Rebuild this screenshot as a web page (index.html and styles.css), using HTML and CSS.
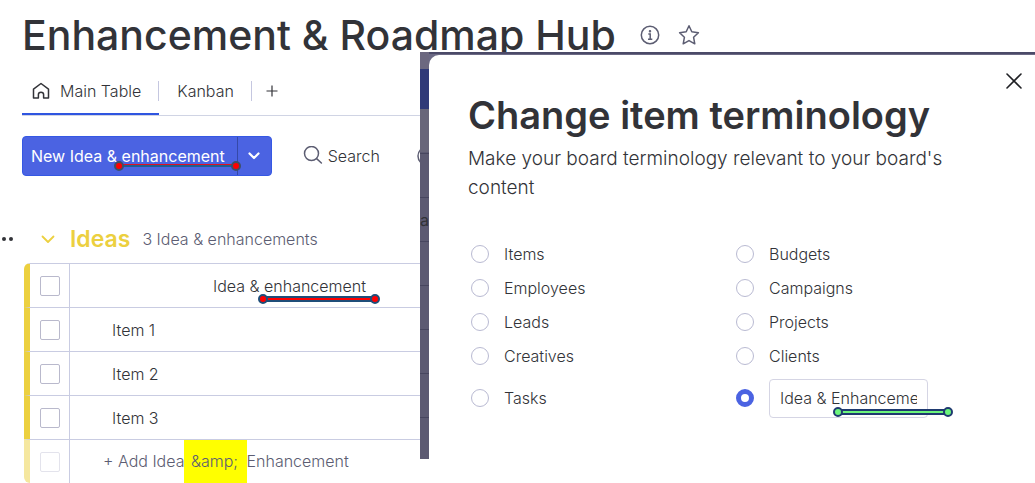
FILE: index.html
```
<!DOCTYPE html>
<html lang="en">
<head>
    <meta charset="UTF-8">
    <meta name="viewport" content="width=device-width, initial-scale=1.0">
    <title>Enhancement &amp; Roadmap Hub</title>
    <link rel="stylesheet" href="styles.css">
</head>
<body>
    <header class="board-header">
        <h1>Enhancement &amp; Roadmap Hub</h1>
        <button class="icon-btn" aria-label="Board info">
            <svg width="20" height="20" viewBox="0 0 20 20" fill="none" stroke="#5c5d72" stroke-width="1.5">
                <circle cx="10" cy="10" r="8.7"/>
                <path d="M8.3 9H10.2V14M8 14.2H12.3"/>
                <circle cx="10" cy="6.2" r="0.5" fill="#5c5d72"/>
            </svg>
        </button>
        <button class="icon-btn" aria-label="Add to favorites">
            <svg width="22" height="22" viewBox="0 0 22 22" fill="none" stroke="#5c5d72" stroke-width="1.5" stroke-linejoin="round">
                <path d="M11 1.8L13.8 7.8L20.4 8.7L15.6 13.3L16.8 19.8L11 16.6L5.2 19.8L6.4 13.3L1.6 8.7L8.2 7.8Z"/>
            </svg>
        </button>
    </header>

    <main class="layout">
        <section class="board">
            <nav class="tabs">
                <a href="#" class="tab active">
                    <svg width="18" height="18" viewBox="0 0 18 18" fill="none" stroke="#323338" stroke-width="1.5" stroke-linejoin="round">
                        <path d="M1.5 7.2L9 1.5L16.5 7.2V16H11.6V12.6C11.6 11 10.6 10.2 9 10.2S6.4 11 6.4 12.6V16H1.5Z"/>
                    </svg>
                    Main Table
                </a>
                <a href="#" class="tab">Kanban</a>
                <button class="add-tab" aria-label="Add view">
                    <svg width="12" height="12" viewBox="0 0 12 12" stroke="#323338" stroke-width="1.2"><path d="M6 0.5V11.5M0.5 6H11.5"/></svg>
                </button>
            </nav>

            <div class="toolbar">
                <div class="split-btn">
                    <button class="new-item">New Idea &amp; <span class="marked">enhancement<i class="callout thin"></i></span></button>
                    <button class="new-menu" aria-label="More item types">
                        <svg width="12" height="8" viewBox="0 0 12 8" fill="none" stroke="#fff" stroke-width="2.2" stroke-linecap="round" stroke-linejoin="round"><path d="M1.5 1.5L6 6L10.5 1.5"/></svg>
                    </button>
                </div>
                <button class="search">
                    <svg width="20" height="20" viewBox="0 0 20 20" fill="none" stroke="#5c5d72" stroke-width="1.5" stroke-linecap="round"><circle cx="8.5" cy="7.5" r="7"/><path d="M13.6 12.6L18.4 17"/></svg>
                    Search
                </button>
                <button class="person" aria-label="Person">
                    <svg width="20" height="20" viewBox="0 0 20 20" fill="none" stroke="#5c5d72" stroke-width="1.5"><circle cx="10" cy="10" r="9"/></svg>
                </button>
            </div>

            <div class="group-header">
                <button class="group-menu" aria-label="Group menu">
                    <svg width="14" height="6" viewBox="0 0 14 6" fill="#323338"><circle cx="4" cy="3" r="2"/><circle cx="11" cy="3" r="2"/></svg>
                </button>
                <button class="group-toggle" aria-label="Collapse group">
                    <svg width="14" height="9" viewBox="0 0 14 9" fill="none" stroke="#ecd03f" stroke-width="1.8" stroke-linecap="round" stroke-linejoin="round"><path d="M1.5 1.5L7 7L12.5 1.5"/></svg>
                </button>
                <h2>Ideas</h2>
                <span class="count">3 Idea &amp; enhancements</span>
            </div>

            <table class="items">
                <thead>
                    <tr>
                        <th class="check"><input type="checkbox" aria-label="Select all"></th>
                        <th class="name">Idea &amp; <span class="marked">enhancement<i class="callout"></i></span></th>
                    </tr>
                </thead>
                <tbody>
                    <tr>
                        <td class="check"><input type="checkbox" aria-label="Select Item 1"></td>
                        <td class="name">Item 1</td>
                    </tr>
                    <tr>
                        <td class="check"><input type="checkbox" aria-label="Select Item 2"></td>
                        <td class="name">Item 2</td>
                    </tr>
                    <tr>
                        <td class="check"><input type="checkbox" aria-label="Select Item 3"></td>
                        <td class="name">Item 3</td>
                    </tr>
                    <tr class="add-row">
                        <td class="check"><input type="checkbox" aria-label="New item" disabled></td>
                        <td class="name">+ Add Idea<span class="highlight"> &amp;amp; </span>Enhancement</td>
                    </tr>
                </tbody>
            </table>
        </section>

        <section class="overlay">
            <div class="backdrop"><span>a</span></div>
            <form class="modal">
                <button type="button" class="close" aria-label="Close">
                    <svg width="16" height="16" viewBox="0 0 16 16" stroke="#1f2024" stroke-width="1.6" stroke-linecap="round"><path d="M1 1L15 15M15 1L1 15"/></svg>
                </button>
                <h2>Change item terminology</h2>
                <p>Make your board terminology relevant to your board's content</p>
                <div class="options">
                    <label><input type="radio" name="term">Items</label>
                    <label><input type="radio" name="term">Budgets</label>
                    <label><input type="radio" name="term">Employees</label>
                    <label><input type="radio" name="term">Campaigns</label>
                    <label><input type="radio" name="term">Leads</label>
                    <label><input type="radio" name="term">Projects</label>
                    <label><input type="radio" name="term">Creatives</label>
                    <label><input type="radio" name="term">Clients</label>
                    <label><input type="radio" name="term">Tasks</label>
                    <div class="custom">
                        <input type="radio" name="term" aria-label="Custom term" checked>
                        <input type="text" aria-label="Custom term name" value="Idea &amp; Enhancement">
                        <i class="callout green"></i>
                    </div>
                </div>
            </form>
        </section>
    </main>
</body>
</html>
```
FILE: styles.css
```
*, *::before, *::after {
    margin: 0;
    padding: 0;
    box-sizing: border-box;
}
body {
    font-family: 'Inter', 'Liberation Sans', sans-serif;
    font-size: 16px;
    font-weight: 300;
    color: #323338;
    background: #fff;
    overflow: hidden;
}
button { font: inherit; color: inherit; background: none; border: none; cursor: pointer; }
svg { display: block; flex: none; }

/* Board title */
.board-header { display: flex; align-items: center; height: 52px; padding: 18px 22px 0; }
.board-header h1 { font-size: 41px; font-weight: 500; line-height: 48px; white-space: nowrap; margin-right: 24px; }
.icon-btn { margin-right: 18px; }

.layout { display: grid; grid-template-columns: 420px 1fr; align-items: start; position: relative; }
.board { min-width: 0; }

/* Tabs */
.tabs { display: flex; align-items: stretch; height: 50px; margin: 14px 0 0 22px; border-bottom: 1px solid #d0d4e4; }
.tab { position: relative; display: flex; align-items: center; gap: 10px; padding: 0 18px; color: inherit; text-decoration: none; }
.tab.active { padding-left: 10px; border-bottom: 2px solid #2f55e0; padding-top: 2px; }
.tab::after { content: ''; position: absolute; right: 0; top: 15px; height: 20px; width: 1px; background: #c5c7e0; }
.add-tab { padding: 0 14px; }

/* Toolbar */
.toolbar { display: flex; align-items: center; height: 40px; margin: 20px 0 0 22px; overflow: hidden; }
.split-btn { display: flex; flex: none; height: 40px; color: #fff; background: #4b63e2; border: 1px solid #3558e4; border-radius: 4px; }
.new-item { padding: 0 12px 0 8px; font-weight: 400; white-space: nowrap; }
.new-menu { width: 34px; display: flex; align-items: center; justify-content: center; border-left: 1px solid #3549a8; }
.search { display: flex; align-items: center; gap: 5px; margin-left: 31px; }
.person { margin-left: 37px; }

/* Group */
.group-header { display: flex; align-items: center; height: 48px; margin-top: 39px; }
.group-menu { width: 14px; }
.group-toggle { margin: 0 15px 0 27px; }
.group-header h2 { font-size: 23px; font-weight: 600; color: #ecd03f; margin-right: 12px; }
.count { color: #5c5d72; }

/* Items table */
.items { width: 396px; margin-left: 24px; border-collapse: separate; border-spacing: 0; table-layout: fixed; }
.items th, .items td { height: 44px; border-top: 1px solid #c9cce2; font-weight: 300; text-align: left; vertical-align: middle; white-space: nowrap; }
.items .check { width: 46px; padding-left: 10px; border-left: 6px solid #ecd03f; border-right: 1px solid #c9cce2; }
.items td.name { padding-left: 42px; }
.items th.name { padding-left: 143px; }
.items th.check { border-top-left-radius: 6px; }
.items .add-row .check { border-left-color: #f5e79f; border-bottom-left-radius: 6px; }
.items .add-row .name { padding-left: 33px; color: #5c5d72; }
input[type="checkbox"] { display: block; appearance: none; width: 20px; height: 20px; border: 1px solid #b9b9cc; border-radius: 2px; background: #fff; }
input[type="checkbox"]:disabled { border-color: #e3e3ec; }
.highlight { display: inline-block; padding: 0 4px 0 2px; line-height: 43px; white-space: pre; background: #ff0; }

/* Underline markers */
.marked { position: relative; }
.callout { position: absolute; left: -3px; right: -11px; bottom: -6px; height: 6px; background: #f00; border: 2px solid #1f4e79; }
.callout::before, .callout::after { content: ''; position: absolute; top: -4px; width: 10px; height: 10px; border-radius: 50%; background: #f00; border: 2px solid #1f4e79; }
.callout::before { left: -5px; }
.callout::after { right: -5px; }
.callout.thin { height: 3px; bottom: -1px; background: #1f5f90; border: none; border-top: 1px solid #e01020; }
.callout.thin::before, .callout.thin::after { border-color: #3f4f66; }
.callout.green { left: 100px; right: -22px; bottom: 8px; background: #6cf57c; border-color: #1f3a70; }
.callout.green::before, .callout.green::after { background: #6cf57c; border-color: #1f3a70; }

/* Terminology dialog */
.overlay { position: relative; display: flex; padding-top: 3px; background: linear-gradient(#4b4a68 0 2px, #6c6a85 2px 17px, #fff 17px); }
.backdrop { flex: none; width: 9px; margin-top: -3px; overflow: hidden; background: linear-gradient(#6c6880 17px, #303a78 17px 57px, #68667a 57px 100px, transparent 100px), repeating-linear-gradient(#5c5a72 0 13px, #47465f 13px 14px, #5c5a72 14px 44px); }
.backdrop span { display: block; margin-top: 158px; font-weight: 400; line-height: 20px; }
.modal { flex: 1; min-width: 0; padding: 18px 13px 36px 39px; background: #fff; border-top-left-radius: 10px; }
.close { display: block; margin-left: auto; width: 16px; height: 16px; }
.modal h2 { font-size: 38px; font-weight: 600; line-height: 44px; margin-top: 4px; white-space: nowrap; }
.modal p { max-width: 480px; font-size: 19px; line-height: 29px; margin-top: 7px; }
.options { display: grid; grid-template-columns: 1fr 1fr; max-width: 530px; margin: 35px 0 0 3px; }
.options label { display: flex; align-items: center; gap: 15px; min-height: 34px; }
.custom { position: relative; display: flex; align-items: center; gap: 15px; justify-self: start; min-height: 50px; }
input[type="radio"] { flex: none; appearance: none; width: 18px; height: 18px; border: 1px solid #b9bad2; border-radius: 50%; background: #fff; }
input[type="radio"]:checked { border: 5px solid #4b63e2; }
input[type="text"] { width: 159px; height: 39px; padding: 0 10px; font: inherit; color: inherit; border: 1px solid #d5d5e4; border-radius: 4px; }
```
